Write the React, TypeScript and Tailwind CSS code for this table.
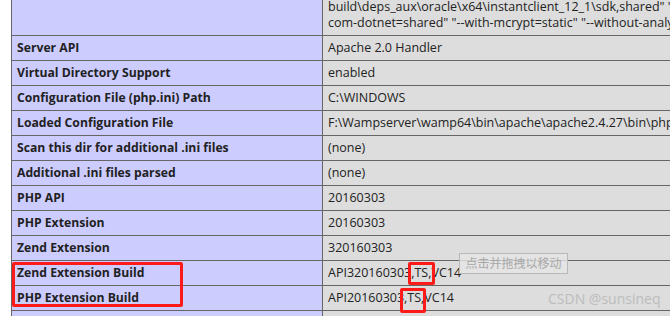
import React from "react";

type Row = { label: string; value: React.ReactNode };

// Red annotation frame drawn over an inline piece of text
function Mark({
  children,
  frame,
}: {
  children: React.ReactNode;
  frame: string;
}) {
  return (
    <span className="relative">
      {children}
      <span
        className={`absolute z-10 border-[3px] border-[#ff1a1a] rounded-[2px] ${frame}`}
      />
    </span>
  );
}

const rows: Row[] = [
  { label: "Server API", value: "Apache 2.0 Handler" },
  { label: "Virtual Directory Support", value: "enabled" },
  { label: "Configuration File (php.ini) Path", value: "C:\\WINDOWS" },
  {
    label: "Loaded Configuration File",
    value: "F:\\Wampserver\\wamp64\\bin\\apache\\apache2.4.27\\bin\\php.ini",
  },
  { label: "Scan this dir for additional .ini files", value: "(none)" },
  { label: "Additional .ini files parsed", value: "(none)" },
  { label: "PHP API", value: "20160303" },
  { label: "PHP Extension", value: "20160303" },
  { label: "Zend Extension", value: "320160303" },
  {
    label: "Zend Extension Build",
    value: (
      <>
        API320160303
        <Mark frame="-left-[3px] -right-[4px] top-[-2px] bottom-[-4px]">,TS,</Mark>
        VC14
      </>
    ),
  },
  {
    label: "PHP Extension Build",
    value: (
      <>
        API20160303
        <Mark frame="-left-[4px] -right-[2px] top-[-1px] bottom-[-7px]">,TS,</Mark>
        VC14
      </>
    ),
  },
  { label: "", value: "" },
];

const cellE =
  "bg-[#ccccff] px-[5px] py-[4px] font-bold text-[12.2px] whitespace-nowrap";
const cellV =
  "bg-[#dddddd] px-[5px] py-[4px] text-[12.5px] whitespace-nowrap min-w-0";

export default function App() {
  return (
    <div
      className="relative w-[670px] h-[316px] overflow-hidden bg-white text-[#222222] leading-[16px]"
      style={{ fontFamily: '"Open Sans", "Noto Sans CJK SC", sans-serif' }}
    >
      <div className="ml-[11px] mt-[-6px] w-[934px] grid grid-cols-[310px_minmax(0,1fr)] gap-px p-px bg-[#666666]">
        <div className={cellE}></div>
        <div className={cellV}>
          <div>
            build\deps_aux\oracle\x64\instantclient_12_1\sdk,shared" "--with-oci8-12c=C:\php-snap-build\deps_aux\oracle
          </div>
          <div>
            com-dotnet=shared" "--with-mcrypt=static" "--without-analyzer" "--with-pgo"
          </div>
        </div>
        {rows.map((r, i) => (
          <React.Fragment key={i}>
            <div className={cellE}>{r.label}</div>
            <div className={cellV}>{r.value}</div>
          </React.Fragment>
        ))}
      </div>

      {/* frame around the two build rows */}
      <div className="absolute left-[12px] top-[262px] w-[171px] h-[45px] border-[3px] border-[#ff1a1a] rounded-[2px]" />

      {/* drag hint */}
      <div className="absolute left-[459px] top-[253px] w-[109px] h-[21px] border border-[#b8b8b8] bg-[#e6e6e6]/80 text-[#a8a8a8] text-[12px] leading-[19px] text-center">
        点击并拖拽以移动
      </div>

      {/* watermark */}
      <div className="absolute left-[548px] top-[290px] text-[14px] leading-[18px] text-[#bcbcbc]">
        CSDN @sunsineq
      </div>
    </div>
  );
}
